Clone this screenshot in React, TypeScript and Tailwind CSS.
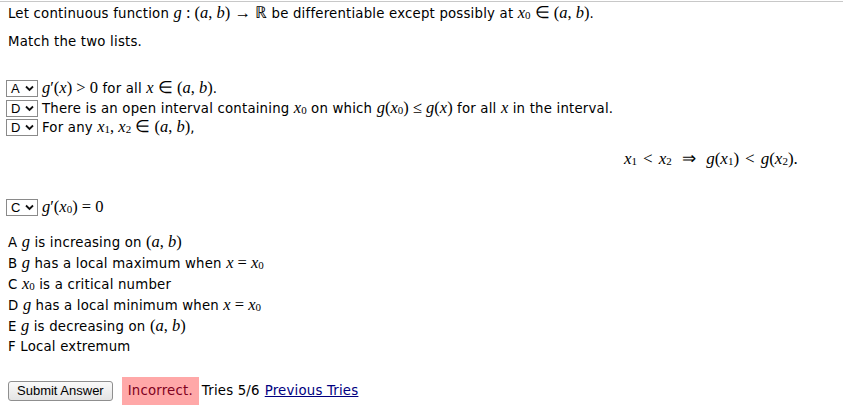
import React from 'react';

const M: React.FC<{ children: React.ReactNode; className?: string }> = ({ children, className = '' }) => (
  <span className={`font-['Liberation_Serif',serif] text-[16.5px] tracking-normal ${className}`}>{children}</span>
);

const I: React.FC<{ children: React.ReactNode }> = ({ children }) => <i className="italic">{children}</i>;

const Sub: React.FC<{ children: React.ReactNode }> = ({ children }) => (
  <sub className="text-[11px] not-italic relative top-[1px]">{children}</sub>
);

const Op: React.FC<{ children: React.ReactNode }> = ({ children }) => <span className="mx-[6px]">{children}</span>;

const X0 = () => (
  <>
    <I>x</I>
    <Sub>0</Sub>
  </>
);

const Pick: React.FC<{ value: string }> = ({ value }) => (
  <span className="inline-flex items-center justify-between w-[32px] h-[17px] border border-[#8a8a8a] bg-white pl-[4px] pr-[3px] mr-[4px] font-['Liberation_Sans',sans-serif] text-[13px] tracking-normal text-black leading-none align-middle">
    {value}
    <svg width="9" height="7" viewBox="0 0 9 7" className="ml-[2px]">
      <path d="M1 1.5 L4.5 5 L8 1.5" fill="none" stroke="#111" strokeWidth="1.8" />
    </svg>
  </span>
);

export default function App() {
  const items: [string, React.ReactNode][] = [
    ['A', <><M><I>g</I></M> is increasing on <M>(<I>a</I>, <I>b</I>)</M></>],
    ['B', <><M><I>g</I></M> has a local maximum when <M><I>x</I> = <X0 /></M></>],
    ['C', <><M><X0 /></M> is a critical number</>],
    ['D', <><M><I>g</I></M> has a local minimum when <M><I>x</I> = <X0 /></M></>],
    ['E', <><M><I>g</I></M> is decreasing on <M>(<I>a</I>, <I>b</I>)</M></>],
    ['F', <>Local extremum</>],
  ];

  return (
    <div className="w-[843px] h-[415px] bg-white text-black font-['DejaVu_Sans',Verdana,sans-serif] text-[13.3px] tracking-[0.2px] overflow-hidden">
      <div className="h-[1px]" />
      <div className="h-[1px] bg-[#c8c8c8]" />
      <div className="pl-[8px]">
        <p className="h-[22px] flex items-center">
          <span>
            Let continuous function <M><I>g</I> : (<I>a</I>, <I>b</I>) → ℝ</M> be differentiable except possibly at{' '}
            <M><X0 /> ∈ (<I>a</I>, <I>b</I>)</M>.
          </span>
        </p>
        <p className="mt-[8px] h-[20px] flex items-center">Match the two lists.</p>

        <div className="mt-[27px] -ml-[2px] flex flex-col">
          <div className="h-[19.5px] flex items-center">
            <Pick value="A" />
            <span>
              <M><I>g</I>′(<I>x</I>) &gt; 0</M> for all <M><I>x</I> ∈ (<I>a</I>, <I>b</I>)</M>.
            </span>
          </div>
          <div className="h-[19.5px] flex items-center">
            <Pick value="D" />
            <span>
              There is an open interval containing <M><X0 /></M> on which <M><I>g</I>(<X0 />) ≤ <I>g</I>(<I>x</I>)</M> for all{' '}
              <M><I>x</I></M> in the interval.
            </span>
          </div>
          <div className="h-[19.5px] flex items-center">
            <Pick value="D" />
            <span>
              For any <M><I>x</I><Sub>1</Sub>, <I>x</I><Sub>2</Sub> ∈ (<I>a</I>, <I>b</I>)</M>,
            </span>
          </div>
          <div className="mt-[9px] h-[24px] flex items-center pl-[618px]">
            <M className="text-[17px]">
              <I>x</I><Sub>1</Sub>
              <Op>&lt;</Op>
              <I>x</I><Sub>2</Sub>
              <Op>&nbsp;⇒&nbsp;</Op>
              <I>g</I>(<I>x</I><Sub>1</Sub>)<Op>&lt;</Op><I>g</I>(<I>x</I><Sub>2</Sub>).
            </M>
          </div>
          <div className="mt-[27px] h-[19px] flex items-center">
            <Pick value="C" />
            <M><I>g</I>′(<X0 />) = 0</M>
          </div>
        </div>

        <ul className="mt-[15px] flex flex-col">
          {items.map(([k, v]) => (
            <li key={k} className="h-[21px] flex items-center">
              <span>
                {k} {v}
              </span>
            </li>
          ))}
        </ul>

        <div className="mt-[19px] flex items-center tracking-normal">
          <button className="h-[20px] px-[8px] border border-[#8f8f8f] rounded-[3px] bg-gradient-to-b from-[#fafafa] to-[#e4e4e4] font-['Liberation_Sans',sans-serif] text-[13px] text-black leading-none">
            Submit Answer
          </button>
          <span className="ml-[9px] h-[28px] px-[6px] flex items-center bg-[#ffa8a8] text-[#800020] text-[13.3px] tracking-[0.2px]">
            Incorrect.
          </span>
          <span className="ml-[3px] text-[13.3px] tracking-[0.2px]">Tries 5/6</span>
          <a className="ml-[5px] text-[13.3px] tracking-[0.2px] text-[#00007f] underline">Previous Tries</a>
        </div>
      </div>
    </div>
  );
}
